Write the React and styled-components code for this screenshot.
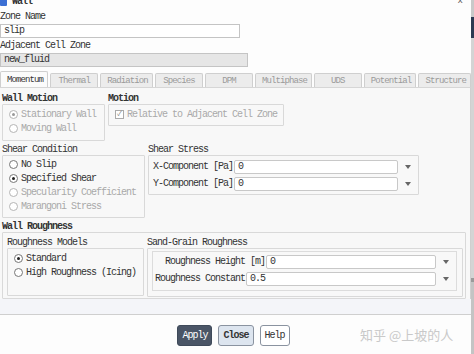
import React from "react";
import styled, { createGlobalStyle } from "styled-components";

const GlobalStyle = createGlobalStyle`
  html, body {
    margin: 0;
    padding: 0;
    background: #fdfdfd;
    overflow: hidden;
  }
  body {
    font-family: "Liberation Mono", "Noto Sans CJK SC", monospace;
    font-size: 10px;
    letter-spacing: -1px;
    color: #333;
  }
`;

const Window = styled.div`
  display: flex;
  width: 474px;
  height: 354px;
  overflow: hidden;
  position: relative;
`;

const Main = styled.div`
  width: 471px;
  display: flex;
  flex-direction: column;
`;

const EdgeStrip = styled.div`
  width: 3px;
  background: linear-gradient(
    to bottom,
    #c9c9c9 0,
    #c9c9c9 17px,
    #2c3a52 17px,
    #2c3a52 38px,
    #d4d4d4 38px,
    #d4d4d4 278px,
    #9a9a9a 278px,
    #9a9a9a 282px,
    #c4c4c4 282px
  );
`;

const TitleBar = styled.div`
  height: 12px;
  margin-top: -5px;
  display: flex;
  align-items: center;
  gap: 5px;
`;

const AppIcon = styled.div`
  width: 7px;
  height: 10px;
  background: #3b6fd4;
  border-radius: 1px;
`;

const Title = styled.span`
  font-weight: bold;
  font-size: 10px;
`;

const CloseX = styled.span`
  margin-left: auto;
  margin-right: 9px;
  font-size: 9px;
  color: #555;
`;

const Top = styled.div`
  display: flex;
  flex-direction: column;
  padding-top: 4px;
  width: 248px;
`;

const FieldLabel = styled.div`
  height: 12px;
  line-height: 12px;
  margin-bottom: 1px;
`;

const TextField = styled.div`
  height: 14px;
  line-height: 12px;
  box-sizing: border-box;
  border: 1px solid #c4c4c4;
  background: ${(p) => (p.$readOnly ? "#e6e6e6" : "#fff")};
  padding-left: 3px;
  margin-bottom: 2px;
  width: ${(p) => (p.$readOnly ? "248px" : "240px")};
`;

const TabBar = styled.div`
  display: flex;
  gap: 2px;
  margin-top: 2px;
  height: 16px;
  align-items: flex-end;
`;

const Tab = styled.div`
  min-width: 48px;
  padding: 0 6px;
  box-sizing: border-box;
  text-align: center;
  font-size: 9px;
  letter-spacing: -0.9px;
  height: ${(p) => (p.$active ? "16px" : "14px")};
  line-height: ${(p) => (p.$active ? "16px" : "14px")};
  color: ${(p) => (p.$active ? "#333" : "#9a9a9a")};
  background: ${(p) => (p.$active ? "#fbfbfb" : "#ececec")};
  border: 1px solid #cfcfcf;
  border-bottom: none;
  border-radius: 2px 2px 0 0;
`;

const Panel = styled.div`
  height: 212px;
  background: #f8f8f8;
  border-top: 1px solid #d6d6d6;
  border-right: 1px solid #cfcfcf;
  padding: 5px 0 0 2px;
  display: flex;
  flex-direction: column;
  gap: 3px;
  box-sizing: border-box;
`;

const Row = styled.div`
  display: flex;
  gap: ${(p) => p.$gap || 3}px;
`;

const Section = styled.div`
  display: flex;
  flex-direction: column;
  width: ${(p) => p.$width}px;
`;

const SectionTitle = styled.div`
  height: 11px;
  line-height: 11px;
  white-space: nowrap;
  font-weight: ${(p) => (p.$bold ? "bold" : "normal")};
`;

const Box = styled.div`
  border: 1px solid #d9d9d9;
  border-radius: 1px;
  padding: ${(p) => p.$pad || "2px 6px 3px 6px"};
  height: ${(p) => p.$height}px;
  box-sizing: border-box;
  display: flex;
  flex-direction: column;
`;

const Option = styled.div`
  height: 14px;
  display: flex;
  align-items: center;
  gap: 3px;
  white-space: nowrap;
  color: ${(p) => (p.$disabled ? "#a9a9a9" : "#333")};
`;

const Radio = styled.span`
  width: 7px;
  height: 7px;
  border-radius: 50%;
  border: 1px solid ${(p) => (p.$disabled ? "#b5b5b5" : "#777")};
  background: #fff;
  display: flex;
  align-items: center;
  justify-content: center;
  flex-shrink: 0;

  &::after {
    content: "";
    width: 3px;
    height: 3px;
    border-radius: 50%;
    background: ${(p) =>
      p.$checked ? (p.$disabled ? "#999" : "#222") : "transparent"};
  }
`;

const Check = styled.span`
  width: 7px;
  height: 7px;
  flex-shrink: 0;
  border: 1px solid #aaa;
  background: #fff;
  font-size: 7px;
  line-height: 7px;
  text-align: center;
  color: #888;
  letter-spacing: 0;
`;

const FieldRow = styled.div`
  display: flex;
  align-items: center;
  height: 17px;
  padding-left: ${(p) => p.$indent || 0}px;
`;

const InputLabel = styled.span`
  white-space: nowrap;
  padding-right: 1px;
`;

const Input = styled.div`
  flex: 1;
  height: 14px;
  line-height: 12px;
  box-sizing: border-box;
  border: 1px solid #c8c8c8;
  border-radius: 2px;
  background: #fff;
  padding-left: 3px;
`;

const Arrow = styled.span`
  width: 20px;
  display: flex;
  justify-content: center;

  &::after {
    content: "";
    border-left: 3px solid transparent;
    border-right: 3px solid transparent;
    border-top: 4px solid #666;
  }
`;

const Frame = styled.div`
  border: 1px solid #dcdcdc;
  margin: 2px 5px 0 4px;
  padding: 1px 0 3px 2px;
`;

const Footer = styled.div`
  flex: 1;
  display: flex;
  flex-direction: column;
`;

const FooterBand = styled.div`
  height: 15px;
  background: #f4f5f9;
  border-bottom: 1px solid #cfcfcf;
`;

const ButtonRow = styled.div`
  display: flex;
  justify-content: center;
  gap: 6px;
  padding-top: 10px;
  padding-right: 4px;
`;

const Button = styled.div`
  height: 21px;
  padding: 0 4px;
  box-sizing: border-box;
  line-height: 19px;
  border-radius: 3px;
  border: 1px solid ${(p) => (p.$variant === "primary" ? "#3f4a5a" : "#8a93a0")};
  background: ${(p) =>
    p.$variant === "primary"
      ? "#4a5566"
      : p.$variant === "soft"
      ? "#dde5ef"
      : "#fff"};
  color: ${(p) => (p.$variant === "primary" ? "#fff" : "#333")};
  font-weight: ${(p) => (p.$variant === "soft" ? "bold" : "normal")};
`;

const Watermark = styled.div`
  position: absolute;
  left: 360px;
  top: 325px;
  font-family: "Noto Sans CJK SC", sans-serif;
  font-size: 13px;
  letter-spacing: 0;
  color: #c9c9c9;
`;

const tabs = [
  "Momentum",
  "Thermal",
  "Radiation",
  "Species",
  "DPM",
  "Multiphase",
  "UDS",
  "Potential",
  "Structure",
];

const RadioOption = ({ label, checked, disabled }) => (
  <Option $disabled={disabled}>
    <Radio $checked={checked} $disabled={disabled} />
    {label}
  </Option>
);

const ValueField = ({ label, value, indent }) => (
  <FieldRow $indent={indent}>
    <InputLabel>{label}</InputLabel>
    <Input>{value}</Input>
    <Arrow />
  </FieldRow>
);

export default function App() {
  return (
    <Window>
      <GlobalStyle />
      <Main>
        <TitleBar>
          <AppIcon />
          <Title>Wall</Title>
          <CloseX>x</CloseX>
        </TitleBar>

        <Top>
          <FieldLabel>Zone Name</FieldLabel>
          <TextField>slip</TextField>
          <FieldLabel>Adjacent Cell Zone</FieldLabel>
          <TextField $readOnly>new_fluid</TextField>
        </Top>

        <TabBar>
          {tabs.map((t, i) => (
            <Tab key={t} $active={i === 0}>
              {t}
            </Tab>
          ))}
        </TabBar>

        <Panel>
          <Row>
            <Section $width={103}>
              <SectionTitle $bold>Wall Motion</SectionTitle>
              <Box $height={37}>
                <RadioOption label="Stationary Wall" checked disabled />
                <RadioOption label="Moving Wall" disabled />
              </Box>
            </Section>
            <Section $width={176}>
              <SectionTitle $bold>Motion</SectionTitle>
              <Box $height={22} $pad="2px 6px">
                <Option $disabled>
                  <Check>✓</Check>
                  Relative to Adjacent Cell Zone
                </Option>
              </Box>
            </Section>
          </Row>

          <Row>
            <Section $width={143}>
              <SectionTitle>Shear Condition</SectionTitle>
              <Box $height={63} $pad="1px 6px 3px 6px">
                <RadioOption label="No Slip" />
                <RadioOption label="Specified Shear" checked />
                <RadioOption label="Specularity Coefficient" disabled />
                <RadioOption label="Marangoni Stress" disabled />
              </Box>
            </Section>
            <Section $width={271}>
              <SectionTitle>Shear Stress</SectionTitle>
              <Box $height={40} $pad="2px 0 2px 4px">
                <ValueField label="X-Component [Pa]" value="0" />
                <ValueField label="Y-Component [Pa]" value="0" />
              </Box>
            </Section>
          </Row>

          <Section $width={464}>
            <SectionTitle $bold>Wall Roughness</SectionTitle>
            <Box $height={67} $pad="4px 2px 1px 4px">
              <Row $gap={3}>
                <Section $width={137}>
                  <SectionTitle>Roughness Models</SectionTitle>
                  <Box $height={48} $pad="2px 6px">
                    <RadioOption label="Standard" checked />
                    <RadioOption label="High Roughness (Icing)" />
                  </Box>
                </Section>
                <Section $width={316}>
                  <SectionTitle>Sand-Grain Roughness</SectionTitle>
                  <Box $height={49} $pad="0">
                    <Frame>
                      <ValueField
                        label="Roughness Height [m]"
                        value="0"
                        indent={10}
                      />
                      <ValueField label="Roughness Constant" value="0.5" />
                    </Frame>
                  </Box>
                </Section>
              </Row>
            </Box>
          </Section>
        </Panel>

        <Footer>
          <FooterBand />
          <ButtonRow>
            <Button $variant="primary">Apply</Button>
            <Button $variant="soft">Close</Button>
            <Button>Help</Button>
          </ButtonRow>
        </Footer>
      </Main>
      <EdgeStrip />
      <Watermark>知乎 @上坡的人</Watermark>
    </Window>
  );
}
